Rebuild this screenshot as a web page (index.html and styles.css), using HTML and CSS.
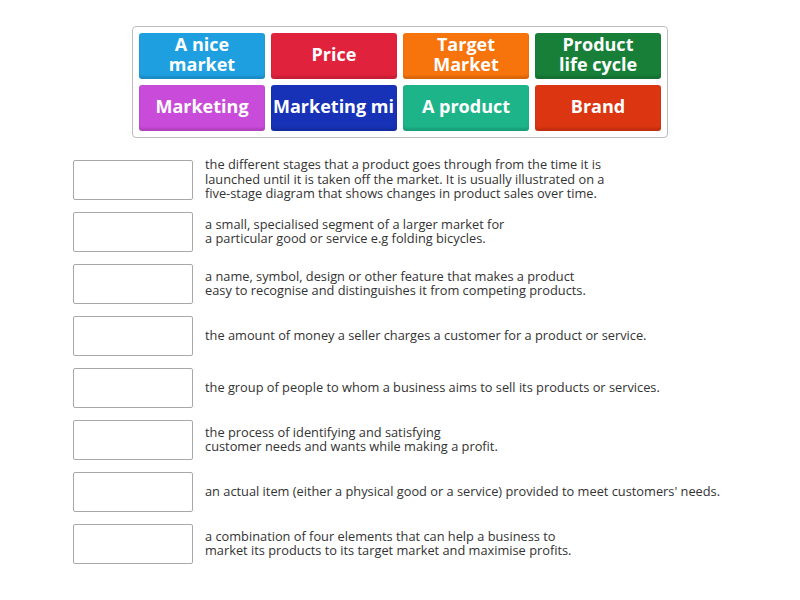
FILE: index.html
```html
<!DOCTYPE html>
<html>
<head>
<meta charset="utf-8">
<link rel="stylesheet" href="styles.css">
</head>
<body>
<div class="page">
  <div class="bank">
    <div class="tile c-blue"><span>A nice<br>market</span></div>
    <div class="tile c-red"><span>Price</span></div>
    <div class="tile c-orange"><span>Target<br>Market</span></div>
    <div class="tile c-green"><span>Product<br>life cycle</span></div>
    <div class="tile c-purple"><span>Marketing</span></div>
    <div class="tile c-navy"><span>Marketing mi</span></div>
    <div class="tile c-teal"><span>A product</span></div>
    <div class="tile c-brand"><span>Brand</span></div>
  </div>
  <div class="rows">
    <div class="row"><div class="slot"></div><div class="def">the different stages that a product goes through from the time it is<br>launched until it is taken off the market. It is usually illustrated on a<br>five-stage diagram that shows changes in product sales over time.</div></div>
    <div class="row"><div class="slot"></div><div class="def">a small, specialised segment of a larger market for<br>a particular good or service e.g folding bicycles.</div></div>
    <div class="row"><div class="slot"></div><div class="def">a name, symbol, design or other feature that makes a product<br>easy to recognise and distinguishes it from competing products.</div></div>
    <div class="row"><div class="slot"></div><div class="def">the amount of money a seller charges a customer for a product or service.</div></div>
    <div class="row"><div class="slot"></div><div class="def">the group of people to whom a business aims to sell its products or services.</div></div>
    <div class="row"><div class="slot"></div><div class="def">the process of identifying and satisfying<br>customer needs and wants while making a profit.</div></div>
    <div class="row"><div class="slot"></div><div class="def">an actual item (either a physical good or a service) provided to meet customers' needs.</div></div>
    <div class="row"><div class="slot"></div><div class="def">a combination of four elements that can help a business to<br>market its products to its target market and maximise profits.</div></div>
  </div>
</div>
</body>
</html>
```

FILE: styles.css
```css
html, body {
  margin: 0;
  padding: 0;
  background: #ffffff;
}
.page {
  padding-top: 26px;
  font-family: "Open Sans", "DejaVu Sans", sans-serif;
}
.bank {
  margin-left: 132px;
  width: 522px;
  padding: 6px;
  border: 1px solid #bdbdbd;
  border-radius: 4px;
  display: grid;
  grid-template-columns: repeat(4, 126px);
  grid-auto-rows: 46px;
  gap: 6px;
}
.tile {
  border-radius: 3px;
  color: #ffffff;
  font-weight: 700;
  font-size: 18px;
  line-height: 20px;
  display: flex;
  align-items: center;
  justify-content: center;
  text-align: center;
  overflow: hidden;
  white-space: nowrap;
  padding: 0 3px 4px;
  box-sizing: border-box;
  box-shadow: inset 0 -3px 2px rgba(0,0,0,0.12);
}
.tile span { display: block; }
.c-blue { background: #1e9fe0; }
.c-red { background: #e1223d; }
.c-orange { background: #f7730b; }
.c-green { background: #177f38; }
.c-purple { background: #c94bd9; }
.c-navy { background: #1732b6; justify-content: flex-start; padding-left: 2px; }
.c-teal { background: #1db48a; }
.c-brand { background: #db3511; }
.rows {
  margin-top: 22px;
  margin-left: 73px;
  display: flex;
  flex-direction: column;
  gap: 12px;
}
.row {
  display: flex;
  align-items: center;
  gap: 12px;
  height: 40px;
}
.slot {
  width: 118px;
  height: 38px;
  border: 1px solid #a8a8a8;
  border-radius: 2px;
  flex: none;
}
.def {
  font-size: 12.8px;
  line-height: 14.5px;
  color: #333333;
  padding-bottom: 2px;
}
```
